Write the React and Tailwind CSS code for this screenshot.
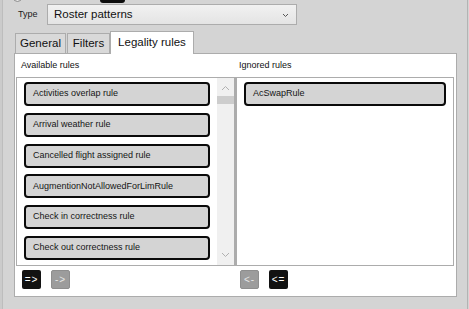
import { useState } from 'react';

const availableRules = [
  'Activities overlap rule',
  'Arrival weather rule',
  'Cancelled flight assigned rule',
  'AugmentionNotAllowedForLimRule',
  'Check in correctness rule',
  'Check out correctness rule',
];

const ignoredRules = ['AcSwapRule'];

function RuleItem({ label, width }) {
  return (
    <div
      className={`${width} h-[24px] shrink-0 flex items-center pl-[7px] border-2 border-[#0a0a0a] rounded-[4px] bg-[#d4d4d4] text-[9px] text-[#141414]`}
    >
      {label}
    </div>
  );
}

function ArrowButton({ label, dark }) {
  return (
    <button
      className={`w-[19px] h-[19px] rounded-[2px] flex items-center justify-center text-[10px] leading-none tracking-[1px] ${
        dark ? 'bg-[#121212] text-white' : 'bg-[#9c9c9c] text-[#e6e6e6] border border-[#8e8e8e]'
      }`}
    >
      {label}
    </button>
  );
}

export default function App() {
  const [tab, setTab] = useState('Legality rules');
  const tabs = [
    { name: 'General', w: 'w-[51px]' },
    { name: 'Filters', w: 'w-[43px]' },
    { name: 'Legality rules', w: 'w-[84px]' },
  ];

  return (
    <div
      className="w-[469px] h-[309px] bg-[#d4d4d4] overflow-hidden flex"
      style={{ fontFamily: '"Liberation Sans", Arial, sans-serif' }}
    >
      <div className="w-[2px] h-full bg-[#cbcbcb]" />
      <div className="flex-1 h-full border-l border-[#bdbdbd] flex flex-col">
        {/* cut-off controls above */}
        <div className="h-[4px] relative">
          <div className="absolute left-[10px] top-[-7px] w-[9px] h-[9px] rounded-full border border-[#8a8a8a] bg-[#e8e8e8]" />
          <div className="absolute left-[97px] top-[-6px] w-[25px] h-[9px] rounded-[3px] bg-[#0d0d0d]" />
        </div>

        {/* Type row */}
        <div className="flex items-center h-[21px] pl-[15px]">
          <span className="w-[29px] text-[9px] text-[#1b1b1b] pt-[1px]">Type</span>
          <div className="w-[250px] h-[21px] border border-[#acacac] bg-gradient-to-b from-[#f1f1f1] to-[#e4e4e4] flex items-center justify-between pl-[6px] pr-[7px]">
            <span className="text-[11.5px] text-[#111]">Roster patterns</span>
            <svg width="7" height="5" viewBox="0 0 7 5" className="mt-[1px]">
              <path d="M1 1 L3.5 3.5 L6 1" fill="none" stroke="#555" strokeWidth="1" />
            </svg>
          </div>
        </div>

        {/* Tabs */}
        <div className="flex items-end h-[23px] mt-[5px] pl-[12px] relative z-10">
          {tabs.map((t) => {
            const active = tab === t.name;
            return (
              <button
                key={t.name}
                onClick={() => setTab(t.name)}
                className={`${t.w} border border-b-0 border-[#acacac] flex items-center justify-center text-[11.5px] text-[#111] ${
                  active ? 'h-[23px] bg-white -mb-px pb-[1px]' : 'h-[20px] bg-[#d9d9d9]'
                } ${t.name === 'Filters' ? 'ml-[1px]' : ''}`}
              >
                {t.name}
              </button>
            );
          })}
        </div>

        {/* Panel */}
        <div className="ml-[11px] w-[443px] h-[244px] border border-[#acacac] bg-white flex flex-col">
          <div className="flex h-[23px] items-center pt-[1px]">
            <span className="w-[219px] pl-[6px] text-[9px] text-[#111]">Available rules</span>
            <span className="pl-[5px] text-[9px] text-[#111]">Ignored rules</span>
          </div>

          <div className="grid grid-cols-2 h-[189px] pl-[1px] pr-[2px]">
            {/* Available list */}
            <div className="border border-[#acacac] flex overflow-hidden">
              <div className="flex-1 flex flex-col gap-[6.8px] pt-[4px] pl-[7px]">
                {availableRules.map((r) => (
                  <RuleItem key={r} label={r} width="w-[186px]" />
                ))}
              </div>
              <div className="w-[17px] h-full bg-[#f0f0f0] flex flex-col items-center">
                <svg width="9" height="6" viewBox="0 0 9 6" className="mt-[7px]">
                  <path d="M1 5 L4.5 1.5 L8 5" fill="none" stroke="#b0b0b0" strokeWidth="1" />
                </svg>
                <div className="w-full h-[8px] bg-[#cdcdcd] mt-[5px]" />
                <div className="flex-1" />
                <svg width="9" height="6" viewBox="0 0 9 6" className="mb-[7px]">
                  <path d="M1 1 L4.5 4.5 L8 1" fill="none" stroke="#b0b0b0" strokeWidth="1" />
                </svg>
              </div>
            </div>

            {/* Ignored list */}
            <div className="border border-[#acacac] border-l-2 flex flex-col pt-[4px] pl-[7px]">
              {ignoredRules.map((r) => (
                <RuleItem key={r} label={r} width="w-[202px]" />
              ))}
            </div>
          </div>

          <div className="flex pt-[4px] pl-[7px]">
            <div className="w-[218px] flex gap-[10px]">
              <ArrowButton label="=>" dark />
              <ArrowButton label="->" />
            </div>
            <div className="flex gap-[10px]">
              <ArrowButton label="<-" />
              <ArrowButton label="<=" dark />
            </div>
          </div>
        </div>
      </div>
      <div className="w-[2px] h-full border-l border-[#b3b3b3] bg-[#d4d4d4]" />
    </div>
  );
}
